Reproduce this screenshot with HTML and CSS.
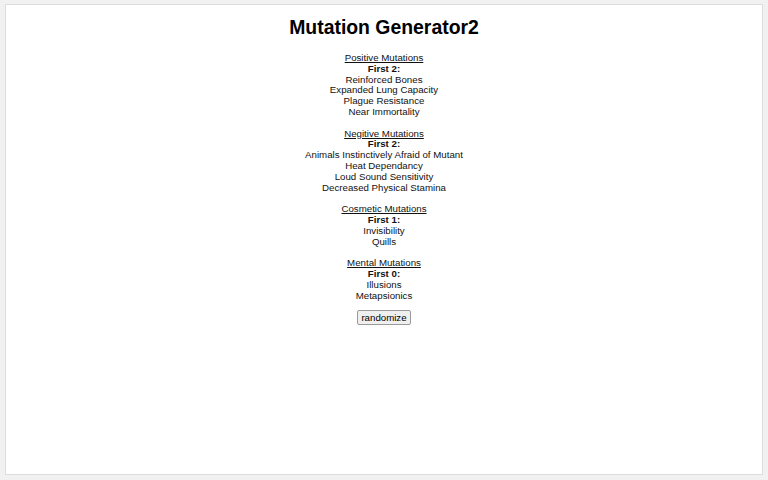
FILE: index.html
```html
<!DOCTYPE html>
<html>
<head>
<meta charset="utf-8">
<title>Mutation Generator2</title>
<link rel="stylesheet" href="styles.css">
</head>
<body>
<div class="panel">
  <h1 class="title">Mutation Generator2</h1>
  <div class="content">
    <section class="group">
      <div class="heading">Positive Mutations</div>
      <div class="count">First 2:</div>
      <div>Reinforced Bones</div>
      <div>Expanded Lung Capacity</div>
      <div>Plague Resistance</div>
      <div>Near Immortality</div>
    </section>
    <section class="group">
      <div class="heading">Negitive Mutations</div>
      <div class="count">First 2:</div>
      <div>Animals Instinctively Afraid of Mutant</div>
      <div>Heat Dependancy</div>
      <div>Loud Sound Sensitivity</div>
      <div>Decreased Physical Stamina</div>
    </section>
    <section class="group">
      <div class="heading">Cosmetic Mutations</div>
      <div class="count">First 1:</div>
      <div>Invisibility</div>
      <div>Quills</div>
    </section>
    <section class="group">
      <div class="heading">Mental Mutations</div>
      <div class="count">First 0:</div>
      <div>Illusions</div>
      <div>Metapsionics</div>
    </section>
    <button class="btn" type="button">randomize</button>
  </div>
</div>
</body>
</html>
```
FILE: styles.css
```css
html, body {
  margin: 0;
  padding: 0;
}
body {
  background: #f1f1f1;
  padding: 4px 5px 5px 5px;
  font-family: "Liberation Sans", Arial, sans-serif;
  color: #000;
}
.panel {
  box-sizing: border-box;
  height: 471px;
  background: #fff;
  border: 1px solid #dcdcdc;
  text-align: center;
}
.title {
  margin: 0;
  padding-top: 11px;
  font-size: 19.4px;
  line-height: 22px;
  font-weight: bold;
}
.content {
  margin-top: 15px;
  font-size: 9.7px;
  line-height: 10.8px;
  display: flex;
  flex-direction: column;
  align-items: center;
  gap: 10.8px;
  color: #111;
}
.group {
  display: flex;
  flex-direction: column;
  align-items: center;
}
.heading {
  text-decoration: underline;
}
.count {
  font-weight: bold;
}
.btn {
  font-family: "Liberation Sans", Arial, sans-serif;
  font-size: 9.7px;
  line-height: 11px;
  padding: 1px 3px;
  background: #efefef;
  border: 1px solid #9a9a9a;
  border-radius: 2px;
  color: #000;
  margin-top: -2px;
}
```
